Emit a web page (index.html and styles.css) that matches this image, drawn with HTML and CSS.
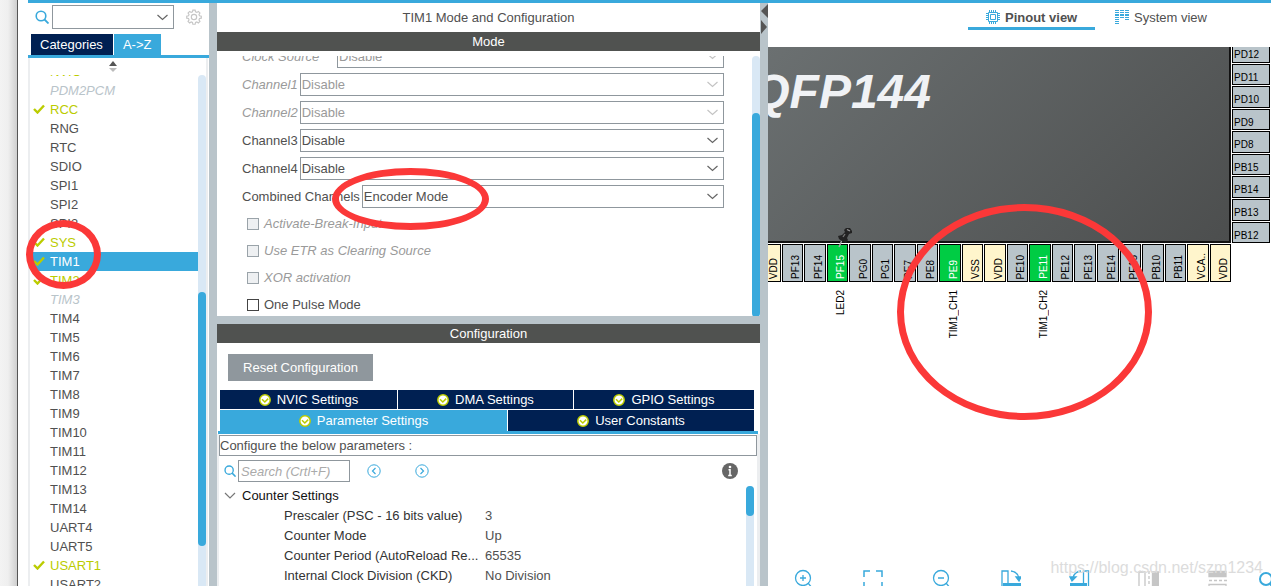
FILE: index.html
```html
<!DOCTYPE html>
<html lang="en">
<head>
    <meta charset="UTF-8">
    <meta name="viewport" content="width=device-width, initial-scale=1.0">
    <title>TIM1 Mode and Configuration</title>
    <link rel="stylesheet" href="styles.css">
</head>
<body>
    <!-- shared icons -->
    <svg class="defs" width="0" height="0">
        <symbol id="tick" viewBox="0 0 12 10"><path d="M1 5l3.5 3.5L11 1.5" fill="none" stroke="#bbcc00" stroke-width="2.4"/></symbol>
        <symbol id="ok" viewBox="0 0 12 12"><circle cx="6" cy="6" r="5.2" fill="#fff" stroke="#bbcc00" stroke-width="1.5"/><path d="M3 5.2l2.8 2.8L9.2 4.6" fill="none" stroke="#bbcc00" stroke-width="1.5"/></symbol>
        <symbol id="search" viewBox="0 0 14 14"><circle cx="6" cy="6" r="4.8" fill="none" stroke="#39a9dc" stroke-width="1.6"/><path d="M9.5 9.5L13.5 13.5" stroke="#39a9dc" stroke-width="1.8"/></symbol>
    </svg>

    <div class="app">
        <aside class="sidebar">
            <div class="finder">
                <svg width="14" height="14"><use href="#search"/></svg>
                <select class="combo" aria-label="Search peripheral"><option></option></select>
                <button type="button" class="icon-btn" aria-label="Settings">
                    <svg width="16" height="16" viewBox="0 0 18 18" fill="none" stroke="#c6c6c6" stroke-width="1.3"><path d="M7.7 1.2h2.6l.4 2 1.5.6 1.7-1.1 1.8 1.8-1.1 1.7.6 1.5 2 .4v2.2l-2 .4-.6 1.5 1.1 1.7-1.8 1.8-1.7-1.1-1.5.6-.4 2H7.7l-.4-2-1.5-.6-1.7 1.1-1.8-1.8 1.1-1.7-.6-1.5-2-.4V8.1l2-.4.6-1.5-1.1-1.7 1.8-1.8 1.7 1.1 1.5-.6z"/><circle cx="9" cy="9" r="3"/></svg>
                </button>
            </div>
            <div class="side-tabs">
                <button type="button" class="side-tab">Categories</button>
                <button type="button" class="side-tab active">A-&gt;Z</button>
            </div>
            <div class="tree">
                <svg class="sorter" width="8" height="11" viewBox="0 0 8 11"><path d="M4 0L8 5H0z" fill="#555"/><path d="M0 7h8L4 11z" fill="#bbb"/></svg>
                <div class="tree-body">
                    <ul class="ip-list">
                        <li class="used">NVIC</li>
                        <li class="off">PDM2PCM</li>
                        <li class="used"><svg width="12" height="10"><use href="#tick"/></svg>RCC</li>
                        <li>RNG</li>
                        <li>RTC</li>
                        <li>SDIO</li>
                        <li>SPI1</li>
                        <li>SPI2</li>
                        <li>SPI3</li>
                        <li class="used"><svg width="12" height="10"><use href="#tick"/></svg>SYS</li>
                        <li class="used selected"><svg width="12" height="10"><use href="#tick"/></svg>TIM1</li>
                        <li class="used"><svg width="12" height="10"><use href="#tick"/></svg>TIM2</li>
                        <li class="off">TIM3</li>
                        <li>TIM4</li>
                        <li>TIM5</li>
                        <li>TIM6</li>
                        <li>TIM7</li>
                        <li>TIM8</li>
                        <li>TIM9</li>
                        <li>TIM10</li>
                        <li>TIM11</li>
                        <li>TIM12</li>
                        <li>TIM13</li>
                        <li>TIM14</li>
                        <li>UART4</li>
                        <li>UART5</li>
                        <li class="used"><svg width="12" height="10"><use href="#tick"/></svg>USART1</li>
                        <li>USART2</li>
                    </ul>
                    <div class="scroll"><div class="thumb thumb-tree"></div></div>
                </div>
            </div>
        </aside>

        <div class="splitter"></div>

        <main class="config">
            <h1 class="title">TIM1 Mode and Configuration</h1>
            <h2 class="bar">Mode</h2>
            <section class="mode">
                <form class="mode-form">
                    <div class="field disabled"><label class="wide" for="clock">Clock Source</label><select id="clock" class="combo" disabled><option>Disable</option></select></div>
                    <div class="field disabled"><label for="ch1">Channel1</label><select id="ch1" class="combo" disabled><option>Disable</option></select></div>
                    <div class="field disabled"><label for="ch2">Channel2</label><select id="ch2" class="combo" disabled><option>Disable</option></select></div>
                    <div class="field"><label for="ch3">Channel3</label><select id="ch3" class="combo"><option>Disable</option></select></div>
                    <div class="field"><label for="ch4">Channel4</label><select id="ch4" class="combo"><option>Disable</option></select></div>
                    <div class="field"><label for="combined">Combined Channels</label><select id="combined" class="combo"><option>Encoder Mode</option></select></div>
                    <div class="checks">
                        <label class="check disabled"><input type="checkbox" disabled>Activate-Break-Input</label>
                        <label class="check disabled"><input type="checkbox" disabled>Use ETR as Clearing Source</label>
                        <label class="check disabled"><input type="checkbox" disabled>XOR activation</label>
                        <label class="check"><input type="checkbox">One Pulse Mode</label>
                    </div>
                </form>
                <div class="scroll"><div class="thumb thumb-mode"></div></div>
            </section>
            <div class="splitter-h"></div>
            <h2 class="bar">Configuration</h2>
            <section class="settings">
                <button type="button" class="reset">Reset Configuration</button>
                <div class="tabs">
                    <div class="tab-row three">
                        <button type="button" class="tab"><svg width="12" height="12"><use href="#ok"/></svg>NVIC Settings</button>
                        <button type="button" class="tab"><svg width="12" height="12"><use href="#ok"/></svg>DMA Settings</button>
                        <button type="button" class="tab"><svg width="12" height="12"><use href="#ok"/></svg>GPIO Settings</button>
                    </div>
                    <div class="tab-row two">
                        <button type="button" class="tab active"><svg width="12" height="12"><use href="#ok"/></svg>Parameter Settings</button>
                        <button type="button" class="tab"><svg width="12" height="12"><use href="#ok"/></svg>User Constants</button>
                    </div>
                </div>
                <div class="params">
                    <p class="hint">Configure the below parameters :</p>
                    <div class="param-search">
                        <svg width="12" height="12"><use href="#search"/></svg>
                        <input type="text" placeholder="Search (Crtl+F)" aria-label="Search parameters">
                        <button type="button" class="icon-btn prev" aria-label="Previous"><svg width="14" height="14" viewBox="0 0 14 14" fill="none" stroke="#39a9dc"><circle cx="7" cy="7" r="6.2"/><path d="M8.5 4L5.5 7l3 3" stroke-width="1.2"/></svg></button>
                        <button type="button" class="icon-btn next" aria-label="Next"><svg width="14" height="14" viewBox="0 0 14 14" fill="none" stroke="#39a9dc"><circle cx="7" cy="7" r="6.2"/><path d="M5.5 4l3 3-3 3" stroke-width="1.2"/></svg></button>
                        <button type="button" class="icon-btn info" aria-label="Information"><svg width="16" height="16" viewBox="0 0 16 16"><circle cx="8" cy="8" r="8" fill="#666"/><circle cx="8" cy="4" r="1.3" fill="#fff"/><path d="M6.5 6.8H8V12.5M6.2 12.5h3.6" fill="none" stroke="#fff" stroke-width="1.5"/></svg></button>
                    </div>
                    <div class="param-body">
                        <div class="param-list">
                            <div class="group"><svg width="12" height="8" viewBox="0 0 12 8"><path d="M1 1l5 5 5-5" fill="none" stroke="#777" stroke-width="1.2"/></svg>Counter Settings</div>
                            <table>
                                <tr><th scope="row">Prescaler (PSC - 16 bits value)</th><td>3</td></tr>
                                <tr><th scope="row">Counter Mode</th><td>Up</td></tr>
                                <tr><th scope="row">Counter Period (AutoReload Re...</th><td>65535</td></tr>
                                <tr><th scope="row">Internal Clock Division (CKD)</th><td>No Division</td></tr>
                            </table>
                        </div>
                        <div class="scroll"><div class="thumb thumb-param"></div></div>
                    </div>
                </div>
            </section>
        </main>

        <div class="splitter">
            <svg width="8" height="32" viewBox="0 0 8 32" fill="#555"><path d="M8 1v14L1 8zM1 17v14l6-7z"/></svg>
        </div>

        <section class="pinout">
            <nav class="views">
                <a href="#pinout" class="view active"><svg width="14" height="14" viewBox="0 0 14 14" fill="none" stroke="#39a9dc"><path d="M2.5 2.5h9v9h-9zM4.5 4.5h5v5h-5z"/><path d="M3.5 0v2M5.5 0v2M7.5 0v2M9.5 0v2M3.5 12v2M5.5 12v2M7.5 12v2M9.5 12v2M0 3.5h2M0 5.5h2M0 7.5h2M0 9.5h2M12 3.5h2M12 5.5h2M12 7.5h2M12 9.5h2"/></svg>Pinout view</a>
                <a href="#system" class="view"><svg width="14" height="14" viewBox="0 0 14 14" fill="#39a9dc"><path d="M0 0h4v1H0zM5 0h4v1H5zM10 0h4v1h-4zM0 2h4v1H0zM5 2h4v1H5zM10 2h4v1h-4zM0 4h4v2H0zM5 4h4v2H5zM10 4h4v2h-4zM0 7h4v1H0zM5 7h4v1H5zM10 7h4v1h-4zM0 9h4v1H0zM10 9h4v1h-4zM0 11h4v1H0zM0 13h4v1H0z"/></svg>System view</a>
            </nav>
            <div class="package">
                <div class="chip"><span class="chip-name">QFP144</span></div>
                <div class="pins-right">
                    <div class="column">
                        <div class="pin">PD12</div>
                        <div class="pin">PD11</div>
                        <div class="pin">PD10</div>
                        <div class="pin">PD9</div>
                        <div class="pin">PD8</div>
                        <div class="pin">PB15</div>
                        <div class="pin">PB14</div>
                        <div class="pin">PB13</div>
                        <div class="pin">PB12</div>
                    </div>
                </div>
                <div class="pins-bottom">
                    <div class="row">
                        <div class="slot"><div class="pin power"><span>VDD</span></div></div>
                        <div class="slot"><div class="pin"><span>PF13</span></div></div>
                        <div class="slot"><div class="pin"><span>PF14</span></div></div>
                        <div class="slot"><div class="pin on"><span>PF15</span></div><span class="signal">LED2</span></div>
                        <div class="slot"><div class="pin"><span>PG0</span></div></div>
                        <div class="slot"><div class="pin"><span>PG1</span></div></div>
                        <div class="slot"><div class="pin"><span>PE7</span></div></div>
                        <div class="slot"><div class="pin"><span>PE8</span></div></div>
                        <div class="slot"><div class="pin on"><span>PE9</span></div><span class="signal">TIM1_CH1</span></div>
                        <div class="slot"><div class="pin power"><span>VSS</span></div></div>
                        <div class="slot"><div class="pin power"><span>VDD</span></div></div>
                        <div class="slot"><div class="pin"><span>PE10</span></div></div>
                        <div class="slot"><div class="pin on"><span>PE11</span></div><span class="signal">TIM1_CH2</span></div>
                        <div class="slot"><div class="pin"><span>PE12</span></div></div>
                        <div class="slot"><div class="pin"><span>PE13</span></div></div>
                        <div class="slot"><div class="pin"><span>PE14</span></div></div>
                        <div class="slot"><div class="pin"><span>PE15</span></div></div>
                        <div class="slot"><div class="pin"><span>PB10</span></div></div>
                        <div class="slot"><div class="pin"><span>PB11</span></div></div>
                        <div class="slot"><div class="pin power"><span>VCA..</span></div></div>
                        <div class="slot"><div class="pin power"><span>VDD</span></div></div>
                    </div>
                </div>
                <svg class="pushpin" width="16" height="20" viewBox="0 0 16 20"><path d="M5 12L2 19" stroke="#aaa" stroke-width="1.4"/><path d="M1 8L5 7 8 4 7 2 9 0h4l2 3v2l-3 1-2 4 1 2-2 3-3-1-4-3z" fill="#222"/><path d="M10 1.500l3 1.500" stroke="#999" stroke-width="1.3"/><path d="M8 6L6 9" stroke="#777" stroke-width="1.3"/></svg>
            </div>
            <div class="toolbar">
                <button type="button" class="icon-btn" aria-label="Zoom in"><svg width="21" height="21" viewBox="0 0 21 21" fill="none" stroke="#39a9dc" stroke-width="1.3"><circle cx="10" cy="9" r="7.5"/><path d="M7 9h6M10 6v6M15 14l5 6"/></svg></button>
                <button type="button" class="icon-btn" aria-label="Best fit"><svg width="21" height="21" viewBox="0 0 21 21" fill="none" stroke="#39a9dc" stroke-width="1.5"><path d="M2 8V2h6M14 2h6v6M2 13v7h6M14 20h6v-7"/></svg></button>
                <button type="button" class="icon-btn" aria-label="Zoom out"><svg width="21" height="21" viewBox="0 0 21 21" fill="none" stroke="#39a9dc" stroke-width="1.3"><circle cx="10" cy="9" r="7.5"/><path d="M7 9h6M15 14l5 6"/></svg></button>
                <button type="button" class="icon-btn" aria-label="Rotate right"><svg width="21" height="21" viewBox="0 0 21 21" fill="none" stroke="#39a9dc" stroke-width="1.3"><path d="M2 20V2h6v18M11 2q7 1 8 7"/><path d="M16 8h5l-2 4z" fill="#39a9dc"/><path d="M3 15.5h18" stroke-width="3"/></svg></button>
                <button type="button" class="icon-btn" aria-label="Rotate left"><svg width="21" height="21" viewBox="0 0 21 21" fill="none" stroke="#39a9dc" stroke-width="1.3"><path d="M14.5 20V2h5v18M12 2q-7 1-8 7"/><path d="M1 8h6l-4 4z" fill="#39a9dc"/><path d="M1 15.5h17" stroke-width="3"/></svg></button>
                <button type="button" class="icon-btn" aria-label="Flip horizontally"><svg width="21" height="21" viewBox="0 0 21 21" fill="none" stroke="#c6c6c6" stroke-width="1.3"><path d="M1 3h6v17H1z"/><path d="M11 2v18" stroke-dasharray="3 2"/><path d="M14.5 3h6v17h-6z" fill="#c6c6c6"/></svg></button>
                <button type="button" class="icon-btn" aria-label="Flip vertically"><svg width="21" height="21" viewBox="0 0 21 21" fill="none" stroke="#c6c6c6" stroke-width="1.3"><path d="M2 2.5h17v5H2z" fill="#c6c6c6"/><path d="M2 11.5h18" stroke-dasharray="3 2"/><path d="M2 15.5h17v5H2z"/></svg></button>
                <button type="button" class="icon-btn find" aria-label="Find"><svg width="21" height="21" viewBox="0 0 21 21" fill="none" stroke="#39a9dc" stroke-width="2"><circle cx="10" cy="10" r="6"/><path d="M14 15l5 5"/></svg></button>
            </div>
            <span class="watermark">https://blog.csdn.net/szm1234</span>
        </section>

        <!-- hand-drawn marks over the panels -->
        <div class="mark mark-ip"></div>
        <div class="mark mark-encoder"></div>
        <div class="mark mark-pins"></div>
    </div>
</body>
</html>
```
FILE: styles.css
```css
* { box-sizing: border-box; }
body {
    margin: 0;
    height: 100vh;
    overflow: hidden;
    font-family: "Liberation Sans", Arial, sans-serif;
    font-size: 13px;
    line-height: 19px;
    color: #505050;
    background: #fff;
}
button, select, input { font: inherit; color: inherit; margin: 0; border-radius: 0; }
button { border: 0; padding: 0; background: none; cursor: pointer; }
h1, h2, p, ul { margin: 0; padding: 0; font-size: 13px; font-weight: normal; }
svg { display: block; flex: none; }
.defs { position: absolute; }
.app {
    position: relative;
    height: 100%;
    padding-left: 28px;
    display: grid;
    grid-template-columns: 181px 8px minmax(0, 543fr) 8px minmax(0, 503fr);
    grid-template-rows: minmax(0, 1fr);
    background: linear-gradient(90deg, #f3f3f3, #efefef 8px, #cfcfcf 17px, #555 17px, #555 18px, #fff 18px);
}
.sidebar, .config, .pinout, .splitter { border-top: 3px solid #39a9dc; min-height: 0; }
.splitter { background: #b9c4ca; }
.splitter-h { height: 8px; background: #b9c4ca; flex: none; }
.icon-btn { display: flex; }

/* drop-downs */
.combo {
    appearance: none;
    height: 23px;
    padding: 0 20px 0 1px;
    border: 1px solid #8f979d;
    background: #fff url("data:image/svg+xml,%3Csvg xmlns='http://www.w3.org/2000/svg' width='11' height='7'%3E%3Cpath d='M.5 1l5 4.5 5-4.5' fill='none' stroke='%23666' stroke-width='1.2'/%3E%3C/svg%3E") no-repeat right 5px center;
}
.combo:disabled {
    opacity: 1;
    color: #9a9a9a;
    background-image: url("data:image/svg+xml,%3Csvg xmlns='http://www.w3.org/2000/svg' width='11' height='7'%3E%3Cpath d='M.5 1l5 4.5 5-4.5' fill='none' stroke='%23c4c4c4' stroke-width='1.2'/%3E%3C/svg%3E");
}

/* scroll bars */
.scroll { width: 8px; flex: none; background: #d9e8f5; border-radius: 4px 4px 0 0; }
.thumb { background: #39a9dc; border-radius: 4px; }
.thumb-tree { height: 254px; margin-top: 217px; }
.thumb-mode { height: 204px; margin-top: 57px; }
.thumb-param { height: 30px; }

/* peripheral list */
.sidebar { display: flex; flex-direction: column; }
.finder { display: flex; align-items: center; padding: 2px 5px 5px 7px; height: 31px; }
.finder .combo { width: 122px; height: 24px; margin: 0 12px 0 3px; }
.side-tabs { display: flex; gap: 1px; padding-left: 3px; border-bottom: 3px solid #39a9dc; }
.side-tab { height: 21px; padding: 0 10px 0 9px; color: #fff; background: #002052; }
.side-tab.active { background: #39a9dc; }
.tree {
    flex: 1;
    min-height: 0;
    display: flex;
    flex-direction: column;
    margin-right: 1px;
    border: solid #eceef0;
    border-width: 0 2px;
}
.sorter { margin: 3px 88px 3px 79px; }
.tree-body { flex: 1; min-height: 0; display: flex; padding-left: 3px; overflow: hidden; }
.ip-list { flex: 1; margin-top: -13px; list-style: none; }
.ip-list li { position: relative; height: 19px; padding-left: 17px; }
.ip-list svg { position: absolute; left: 0; top: 4px; }
.ip-list .used { color: #bbcc00; }
.ip-list .off { color: #b9c4ca; font-style: italic; }
.ip-list .selected { background: #39a9dc; color: #fff; }

/* mode panel */
.config { display: flex; flex-direction: column; }
.title { line-height: 29px; text-align: center; flex: none; }
.bar { background: #505250; color: #fff; text-align: center; flex: none; }
.mode { display: flex; margin-top: 5px; height: 260px; overflow: hidden; flex: none; }
.mode-form { flex: 1; margin-top: -11px; padding: 0 28px 0 25px; }
.field { display: flex; align-items: center; gap: 2px; margin-bottom: 5px; }
.field .wide { width: 93px; }
.field .combo { flex: 1; }
.field.disabled label, .check.disabled { color: #9a9a9a; font-style: italic; }
.checks { margin-top: -3px; padding-left: 5px; }
.check { display: flex; align-items: center; gap: 5px; height: 27px; }
.check input { appearance: none; width: 12px; height: 12px; border: 1px solid #444; background: #fff; }
.check input:disabled { border-color: #9aa3a9; background: #eef0f2; }

/* configuration panel */
.settings { flex: 1; min-height: 0; display: flex; flex-direction: column; }
.reset { align-self: flex-start; width: 145px; height: 27px; margin: 11px 0 9px 11px; background: #8f979d; color: #fff; flex: none; }
.tabs { margin: 0 2px 0 1px; padding: 0 4px 0 2px; border-bottom: 3px solid #39a9dc; }
.tab-row { display: grid; gap: 1px; margin-bottom: 1px; }
.tab-row.three { grid-template-columns: 177fr 175fr 180fr; }
.tab-row.two { grid-template-columns: 287fr 246fr; margin-bottom: 0; }
.tab { display: flex; align-items: center; justify-content: center; gap: 6px; height: 19px; background: #002052; color: #fff; }
.two .tab { height: 21px; }
.tab.active { background: #39a9dc; }
.params { flex: 1; min-height: 0; display: flex; flex-direction: column; padding-top: 1px; border: solid #eceef0; border-width: 0 3px 0 2px; }
.hint { height: 21px; border: 1px solid #8f979d; flex: none; }
.param-search { display: flex; align-items: center; padding: 4px 19px 4px 5px; flex: none; }
.param-search input { width: 112px; height: 22px; margin-left: 2px; padding: 0 2px; border: 1px solid #8f979d; }
.param-search input::placeholder { color: #aaa; font-style: italic; opacity: 1; }
.prev { margin-left: 17px; }
.next { margin-left: 34px; }
.info { margin-left: auto; }
.param-body { flex: 1; min-height: 0; display: flex; overflow: hidden; padding-right: 3px; }
.param-list { flex: 1; line-height: 20px; }
.group { display: flex; align-items: center; gap: 6px; padding-left: 5px; color: #111; }
table { border-collapse: collapse; }
th { width: 266px; padding: 0 0 0 65px; text-align: left; font-weight: normal; color: #333; white-space: nowrap; }
td { padding: 0; }

/* pinout view */
.pinout { position: relative; display: flex; flex-direction: column; overflow: hidden; }
.views { display: flex; gap: 5px; padding-left: 200px; height: 44px; flex: none; }
.view { display: flex; align-items: center; gap: 5px; height: 27px; padding: 4px 15px 0; color: #505050; text-decoration: none; border-bottom: 3px solid transparent; }
.view.active { width: 127px; padding-left: 18px; padding-right: 0; font-weight: bold; white-space: nowrap; border-color: #39a9dc; }
.package {
    position: relative;
    display: grid;
    grid-template-columns: minmax(0, 1fr) 38px;
    grid-template-rows: 196px auto;
    gap: 1px;
    margin-right: 1px;
    font-size: 10px;
    line-height: 12px;
    color: #000;
}
.chip {
    display: flex;
    justify-content: flex-end;
    overflow: hidden;
    padding: 18px 298px 0 0;
    background: linear-gradient(135deg, #6b7071, #4c4e4e);
    border: solid #111;
    border-width: 0 2px 2px 0;
}
.chip-name { font-size: 48px; line-height: 54px; font-weight: bold; font-style: italic; color: #f0f2f5; }
.pins-right { display: flex; align-items: flex-end; overflow: hidden; }
.column { flex: 1; height: 202px; display: flex; flex-direction: column; gap: 1px; }
.column .pin { flex: 1; min-height: 0; padding: 7px 0 0 1px; }
.pin { border: 1px solid #000; background: #b9c4ca; }
.pin.power { background: #fff5cc; }
.pin.on { background: #00cc44; color: #fff; }
.pins-bottom { display: flex; justify-content: flex-end; overflow: hidden; }
.row { flex: 0 0 472px; display: flex; gap: 1px; }
.slot { flex: 1; min-width: 0; display: flex; flex-direction: column; }
.slot .pin { display: flex; align-items: flex-end; justify-content: flex-end; height: 38px; padding-bottom: 2px; }
.slot span { writing-mode: vertical-rl; transform: rotate(180deg); white-space: nowrap; }
.slot .signal { align-self: flex-end; margin: 8px 1px 0 0; }
.pushpin { position: absolute; left: 69px; top: 181px; }
.toolbar { display: flex; align-items: flex-start; gap: 48px; height: 17px; margin-top: auto; padding-left: 25px; overflow: hidden; flex: none; }
.find { margin-left: -20px; }
.watermark { position: absolute; right: 8px; bottom: 9px; font-size: 16px; color: #dcdcdc; }

/* red marks */
.mark { position: absolute; border: 7px solid #fb3838; border-radius: 50%; pointer-events: none; }
.mark-ip { left: 26px; top: 220px; width: 75px; height: 69px; }
.mark-encoder { left: 332px; top: 168px; width: 157px; height: 62px; }
.mark-pins { left: 897px; top: 204px; width: 255px; height: 216px; }
```
